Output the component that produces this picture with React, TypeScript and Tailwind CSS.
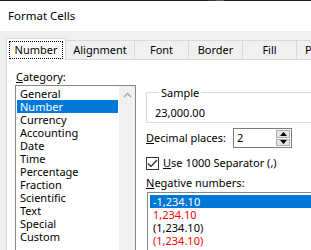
import React from "react";

const categories = [
  "General",
  "Number",
  "Currency",
  "Accounting",
  "Date",
  "Time",
  "Percentage",
  "Fraction",
  "Scientific",
  "Text",
  "Special",
  "Custom",
];

const negatives = [
  { label: "-1,234.10", red: false },
  { label: "1,234.10", red: true },
  { label: "(1,234.10)", red: false },
  { label: "(1,234.10)", red: true },
];

const tabs = ["Alignment", "Font", "Border", "Fill"];
const tabWidths = ["w-[69px]", "w-[54px]", "w-[54px]", "w-[54px]"];

function Tabs() {
  return (
    <div className="flex items-end pl-[6px] h-[29px] pt-[7px]">
      <div className="w-[60px] shrink-0 h-[22px] bg-white border border-b-0 border-[#d9d9d9] flex items-center justify-center">
        <span className="outline outline-1 outline-dotted outline-black px-[5px] h-[16px] leading-[16px]">
          Number
        </span>
      </div>
      {tabs.map((t, i) => (
        <div
          key={t}
          className={`${tabWidths[i]} shrink-0 h-[20px] bg-[#f0f0f0] border-t border-r border-b border-[#d9d9d9] flex items-center justify-center leading-[18px]`}
        >
          {t}
        </div>
      ))}
      <div className="w-[80px] shrink-0 h-[20px] bg-[#f0f0f0] border-t border-b border-[#d9d9d9] flex items-center pl-[8px] leading-[18px] whitespace-nowrap">
        Protection
      </div>
    </div>
  );
}

function CategoryList() {
  return (
    <div className="w-[121px] ml-[8px] pt-[9px] shrink-0">
      <div className="h-[16px] leading-[16px] pl-px">
        <span className="underline">C</span>ategory:
      </div>
      <div className="border border-[#828790] h-[200px] flex">
        <div className="flex-1 p-px">
          {categories.map((c) => (
            <div
              key={c}
              className={`h-[13px] leading-[13px] pl-[3px] ${
                c === "Number" ? "bg-[#0078d7] text-white" : "text-black"
              }`}
            >
              {c}
            </div>
          ))}
        </div>
        <div className="w-[16px] bg-[#f0f0f0] flex justify-center pt-[6px]">
          <svg width="9" height="6" viewBox="0 0 9 6">
            <path d="M1 5 L4.5 1.5 L8 5" fill="none" stroke="#a3a3a3" strokeWidth="1.3" />
          </svg>
        </div>
      </div>
    </div>
  );
}

function Spinner() {
  return (
    <div className="w-[59px] h-[20px] border border-[#7a7a7a] flex">
      <div className="flex-1 pl-[3px] leading-[18px]">2</div>
      <div className="w-[16px] flex flex-col p-px gap-px">
        <div className="flex-1 bg-[#e5e5e5] border border-[#acacac] flex items-center justify-center">
          <svg width="7" height="4" viewBox="0 0 7 4">
            <path d="M0 4 L3.5 0 L7 4 Z" fill="#000" />
          </svg>
        </div>
        <div className="flex-1 bg-[#e5e5e5] border border-[#acacac] flex items-center justify-center">
          <svg width="7" height="4" viewBox="0 0 7 4">
            <path d="M0 0 L3.5 4 L7 0 Z" fill="#000" />
          </svg>
        </div>
      </div>
    </div>
  );
}

function RightPane() {
  return (
    <div className="ml-[10px] w-[200px] shrink-0 pt-[25px]">
      <fieldset className="border border-[#dcdcdc] pl-[8px] pt-[5px] pb-[2px]">
        <legend className="ml-[4px] px-[2px] leading-[15px]">Sample</legend>
        <div className="leading-[15px]">23,000.00</div>
      </fieldset>
      <div className="flex items-center mt-[5px] h-[20px]">
        <div className="w-[87px] shrink-0 whitespace-nowrap">
          <span className="underline">D</span>ecimal places:
        </div>
        <Spinner />
      </div>
      <div className="flex items-center mt-[8px] h-[14px]">
        <div className="w-[13px] h-[13px] border border-[#333] flex items-center justify-center">
          <svg width="11" height="9" viewBox="0 0 11 9">
            <path d="M1 4.5 L4 7.5 L10 1" fill="none" stroke="#222" strokeWidth="1.2" />
          </svg>
        </div>
        <div className="ml-[4px] whitespace-nowrap">
          <span className="underline">U</span>se 1000 Separator (,)
        </div>
      </div>
      <div className="mt-[5px] h-[16px] leading-[16px]">
        <span className="underline">N</span>egative numbers:
      </div>
      <div className="mt-px ml-px border border-[#828790] h-[80px] p-[2px]">
        {negatives.map((n, i) => (
          <div
            key={i}
            className={`h-[13px] leading-[13px] pl-[3px] ${
              i === 0 ? "bg-[#0078d7] text-white" : n.red ? "text-[#ff0000]" : "text-black"
            }`}
          >
            {n.label}
          </div>
        ))}
      </div>
    </div>
  );
}

export default function App() {
  return (
    <div className="w-[311px] h-[250px] overflow-hidden bg-[#f0f0f0] flex flex-col font-['Noto_Sans',sans-serif] text-[11px] text-black">
      <div className="h-px flex shrink-0">
        <div className="w-[208px] bg-[#1e1e1e]" />
        <div className="w-[8px] bg-[#3a3a3a]" />
        <div className="w-[8px] bg-[#5a5a5a]" />
        <div className="flex-1 bg-[#1e1e1e]" />
      </div>
      <div className="h-[30px] bg-white shrink-0 flex items-center pl-[8px] text-[11.5px]">
        Format Cells
      </div>
      <Tabs />
      <div className="flex-1 ml-[6px] bg-white border-l border-[#d9d9d9] flex">
        <CategoryList />
        <RightPane />
      </div>
    </div>
  );
}
